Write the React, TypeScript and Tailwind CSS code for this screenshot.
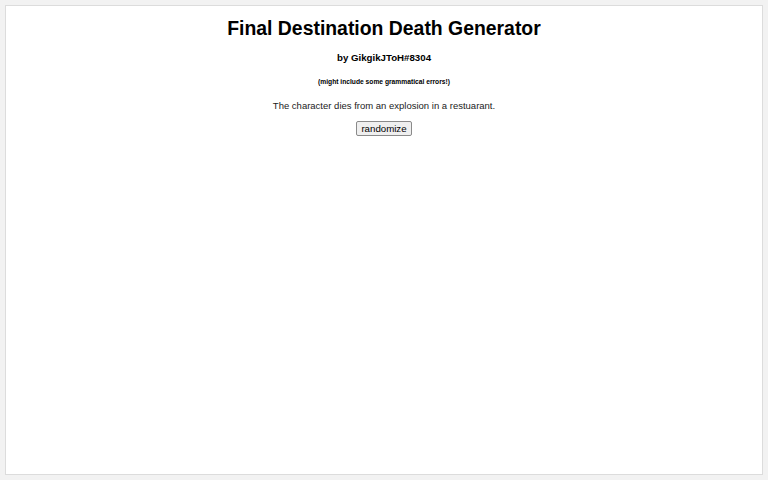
export default function App() {
  return (
    <div className="w-[768px] h-[480px] bg-[#f2f2f2] p-[5px]" style={{ fontFamily: '"Liberation Sans", Arial, sans-serif' }}>
      <div className="h-[470px] bg-white border border-[#dcdcdc] flex flex-col items-center text-black">
        <h1 className="mt-[9px] text-[19.4px] leading-[26px] font-bold">Final Destination Death Generator</h1>
        <p className="mt-[11px] text-[9.7px] leading-[12px] font-bold">by GikgikJToH#8304</p>
        <p className="mt-[14px] text-[6.7px] leading-[8px] font-bold">(might include some grammatical errors!)</p>
        <p className="mt-[14px] text-[9.5px] leading-[12px] text-[#222]">The character dies from an explosion in a restuarant.</p>
        <button className="mt-[9px] h-[15px] px-[4px] text-[9.7px] leading-[12px] bg-[#efefef] border border-[#8a8a8a] rounded-[2px]">randomize</button>
      </div>
    </div>
  );
}
